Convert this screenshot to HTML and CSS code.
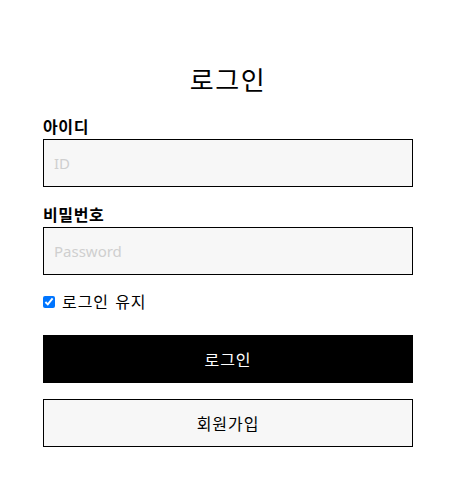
FILE: index.html
```html
<!DOCTYPE html>
<html lang="ko">
<head>
<meta charset="utf-8">
<title>로그인</title>
<link rel="stylesheet" href="styles.css">
</head>
<body>
<div class="wrap">
  <h1 class="title">로그인</h1>
  <form class="form">
    <div class="field">
      <label class="label" for="uid">아이디</label>
      <input class="input" id="uid" type="text" placeholder="ID">
    </div>
    <div class="field">
      <label class="label" for="pw">비밀번호</label>
      <input class="input" id="pw" type="password" placeholder="Password">
    </div>
    <label class="keep"><input class="check" type="checkbox" checked>로그인 유지</label>
    <button class="btn btn-primary" type="button">로그인</button>
    <button class="btn btn-secondary" type="button">회원가입</button>
  </form>
</div>
</body>
</html>
```

FILE: styles.css
```css
html, body {
  margin: 0;
  padding: 0;
  background: #fff;
}
body {
  font-family: "Noto Sans", "Noto Sans CJK KR", sans-serif;
  color: #000;
  padding-left: 43px;
}
.wrap {
  width: 370px;
  padding-top: 60px;
}
.title {
  margin: 0 0 15px;
  font-size: 26px;
  font-weight: 400;
  line-height: 40px;
  letter-spacing: 0.06em;
  text-align: center;
}
.form {
  display: flex;
  flex-direction: column;
}
.field {
  display: flex;
  flex-direction: column;
  margin-bottom: 16px;
}
.label {
  font-size: 16px;
  font-weight: 700;
  line-height: 24px;
  letter-spacing: 0.04em;
}
.input {
  box-sizing: border-box;
  height: 48px;
  width: 100%;
  margin: 0;
  padding: 0 10px;
  border: 1px solid #000;
  border-radius: 0;
  background: #f7f7f7;
  font-family: "Noto Sans", "Noto Sans CJK KR", sans-serif;
  font-size: 15px;
  outline: none;
}
.input::placeholder {
  color: #cfcfcf;
}
.keep {
  display: flex;
  align-items: center;
  font-size: 16px;
  line-height: 22px;
  letter-spacing: 0.06em;
  word-spacing: 1px;
  margin-bottom: 22px;
}
.check {
  width: 12px;
  height: 12px;
  margin: 0 7px 0 0;
}
.btn {
  box-sizing: border-box;
  height: 48px;
  width: 100%;
  margin: 0;
  border: 1px solid #000;
  border-radius: 0;
  font-family: "Noto Sans", "Noto Sans CJK KR", sans-serif;
  font-size: 16px;
  letter-spacing: 0.06em;
  cursor: pointer;
}
.btn-primary {
  background: #000;
  color: #fff;
  margin-bottom: 16px;
}
.btn-secondary {
  background: #f7f7f7;
  color: #000;
}
```
